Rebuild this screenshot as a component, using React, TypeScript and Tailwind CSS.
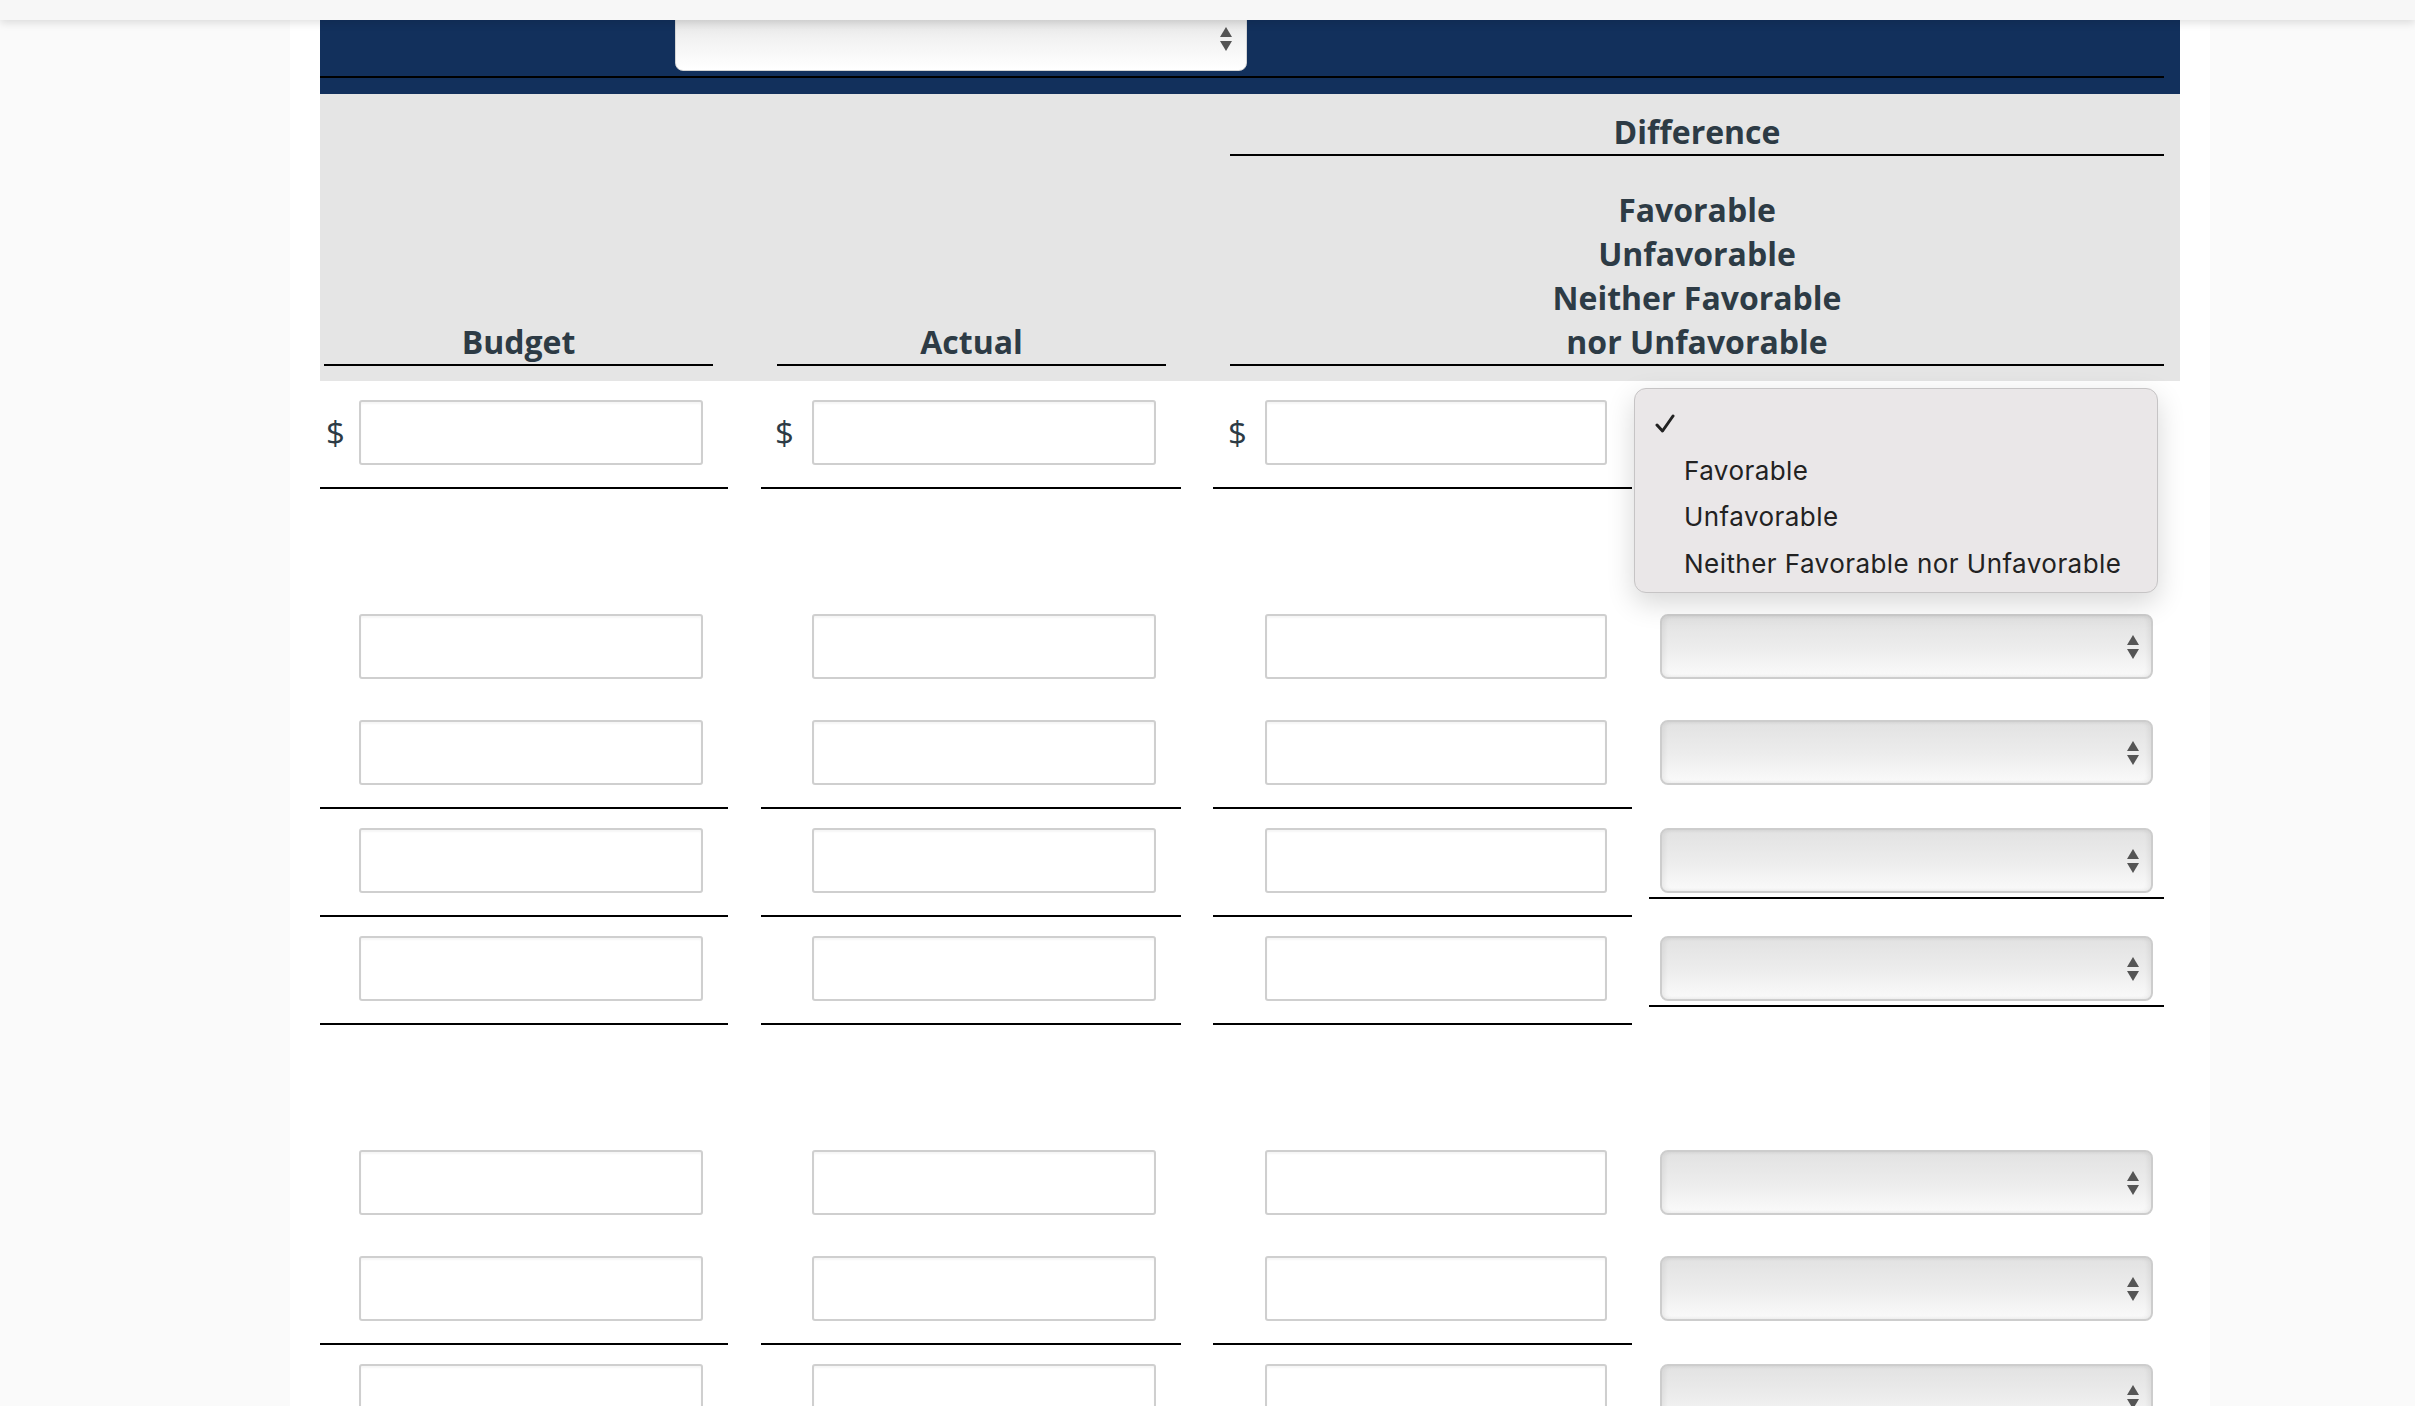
import clsx from "clsx";

type Row =
  | { kind: "blank" }
  | { kind: "entry"; dollar?: boolean; lines: boolean; selectLine?: boolean; menu?: boolean };

const rows: Row[] = [
  { kind: "entry", dollar: true, lines: true, menu: true },
  { kind: "blank" },
  { kind: "entry", lines: false },
  { kind: "entry", lines: true },
  { kind: "entry", lines: true, selectLine: true },
  { kind: "entry", lines: true, selectLine: true },
  { kind: "blank" },
  { kind: "entry", lines: false },
  { kind: "entry", lines: true },
  { kind: "entry", lines: false },
];

const options = ["Favorable", "Unfavorable", "Neither Favorable nor Unfavorable"];

function Arrows() {
  return (
    <svg width="12" height="24" viewBox="0 0 12 24" className="shrink-0">
      <path d="M6 0 L12 10 L0 10 Z" fill="#555555" />
      <path d="M0 14 L12 14 L6 24 Z" fill="#555555" />
    </svg>
  );
}

function FakeSelect({ className }: { className?: string }) {
  return (
    <div
      className={clsx(
        "flex h-[65px] items-center justify-end rounded-[8px] border-2 border-[#cdcdcd] bg-linear-to-b from-[#e2e2e2] via-[#ececec] to-[#fafafa] pr-[12px] shadow-[inset_3px_0_4px_rgba(0,0,0,0.05),inset_-3px_0_4px_rgba(0,0,0,0.05)]",
        className
      )}
    >
      <Arrows />
    </div>
  );
}

function AmountInput({ className }: { className?: string }) {
  return (
    <input
      type="text"
      className={clsx(
        "h-[65px] rounded-[3px] border-2 border-[#cfcfcf] bg-white shadow-[inset_0_2px_2px_rgba(0,0,0,0.04)] outline-none",
        className
      )}
    />
  );
}

function OptionsMenu() {
  return (
    <div className="absolute -left-[15px] top-[7px] z-10 flex h-[205px] w-[524px] flex-col rounded-[12px] border border-[#c6c4c5] bg-[#eae7e8] pt-[12px] font-['Inter',sans-serif] text-[26px] text-[#222222] shadow-[0_10px_28px_rgba(0,0,0,0.16)]">
      <div className="flex h-[46px] items-center pl-[20px]">
        <svg width="20" height="20" viewBox="0 0 20 20">
          <path d="M2 11 L7.5 17 L18 2" fill="none" stroke="#222222" strokeWidth="3" strokeLinecap="round" strokeLinejoin="round" />
        </svg>
      </div>
      {options.map((o) => (
        <div key={o} className="flex h-[46.5px] items-center pl-[49px] tracking-[0.45px]">
          {o}
        </div>
      ))}
    </div>
  );
}

function Cell({
  line,
  dollar,
  padLeft,
  signWidth,
  inputWidth,
  lineWidth,
  gapRight,
}: {
  line: boolean;
  dollar?: boolean;
  padLeft: string;
  signWidth: string;
  inputWidth: string;
  lineWidth: string;
  gapRight: string;
}) {
  return (
    <div className={gapRight}>
      <div className={clsx("flex items-center pt-[19px] pb-[22px]", lineWidth, padLeft, line && "border-b-2 border-black")}>
        <span className={clsx("shrink-0 text-[33px] leading-none text-[#2d3b45]", signWidth)}>{dollar ? "$" : ""}</span>
        <AmountInput className={inputWidth} />
      </div>
    </div>
  );
}

export default function App() {
  return (
    <div className="h-[1406px] overflow-hidden bg-[#fafafa] font-['Open_Sans',sans-serif]">
      {/* sticky toolbar strip */}
      <div className="relative z-20 h-[20px] bg-[#f7f7f7] shadow-[0_3px_8px_rgba(0,0,0,0.12)]" />

      <div className="ml-[290px] h-full w-[1920px] bg-white px-[30px]">
        {/* navy title band */}
        <div className="flex h-[74px] flex-col bg-[#12305c]">
          <div className="-mt-[14px] ml-[355px] flex h-[65px] w-[572px] items-center justify-end rounded-[8px] border border-[#d4d4d4] bg-linear-to-b from-[#dcdcdc] via-[#f2f2f2] to-white pr-[14px]">
            <Arrows />
          </div>
          <div className="mt-[5px] mr-[16px] h-[2px] bg-black" />
        </div>

        {/* column headings */}
        <div className="bg-[#e5e5e5] pt-[16px] pb-[15px] pl-[4px] text-[32px] font-bold leading-[44px] text-[#2d3b45]">
          <div className="grid grid-cols-[389px_389px_934px] items-end gap-x-[64px]">
            <div className="border-b-2 border-black text-center">Budget</div>
            <div className="border-b-2 border-black text-center">Actual</div>
            <div className="flex flex-col">
              <div className="border-b-2 border-black text-center">Difference</div>
              <div className="mt-[32px] border-b-2 border-black text-center">
                <div>Favorable</div>
                <div>Unfavorable</div>
                <div>Neither Favorable</div>
                <div>nor Unfavorable</div>
              </div>
            </div>
          </div>
        </div>

        {/* entry rows */}
        <div className="grid grid-cols-[441px_452px_436px_515px]">
          {rows.map((r, i) =>
            r.kind === "blank" ? (
              <div key={i} className="col-span-4 h-[106px]" />
            ) : (
              <div key={i} className="contents">
                <Cell line={r.lines} dollar={r.dollar} gapRight="pr-[33px]" lineWidth="w-[408px]" padLeft="pl-[6px]" signWidth="w-[33px]" inputWidth="w-[344px]" />
                <Cell line={r.lines} dollar={r.dollar} gapRight="pr-[32px]" lineWidth="w-[420px]" padLeft="pl-[14px]" signWidth="w-[37px]" inputWidth="w-[344px]" />
                <Cell line={r.lines} dollar={r.dollar} gapRight="pr-[17px]" lineWidth="w-[419px]" padLeft="pl-[15px]" signWidth="w-[37px]" inputWidth="w-[342px]" />
                <div className="relative pt-[19px]">
                  <div className={clsx(r.selectLine && "border-b-2 border-black pb-[4px]")}>
                    <FakeSelect className="mx-[11px]" />
                  </div>
                  {r.menu && <OptionsMenu />}
                </div>
              </div>
            )
          )}
        </div>
      </div>
    </div>
  );
}
